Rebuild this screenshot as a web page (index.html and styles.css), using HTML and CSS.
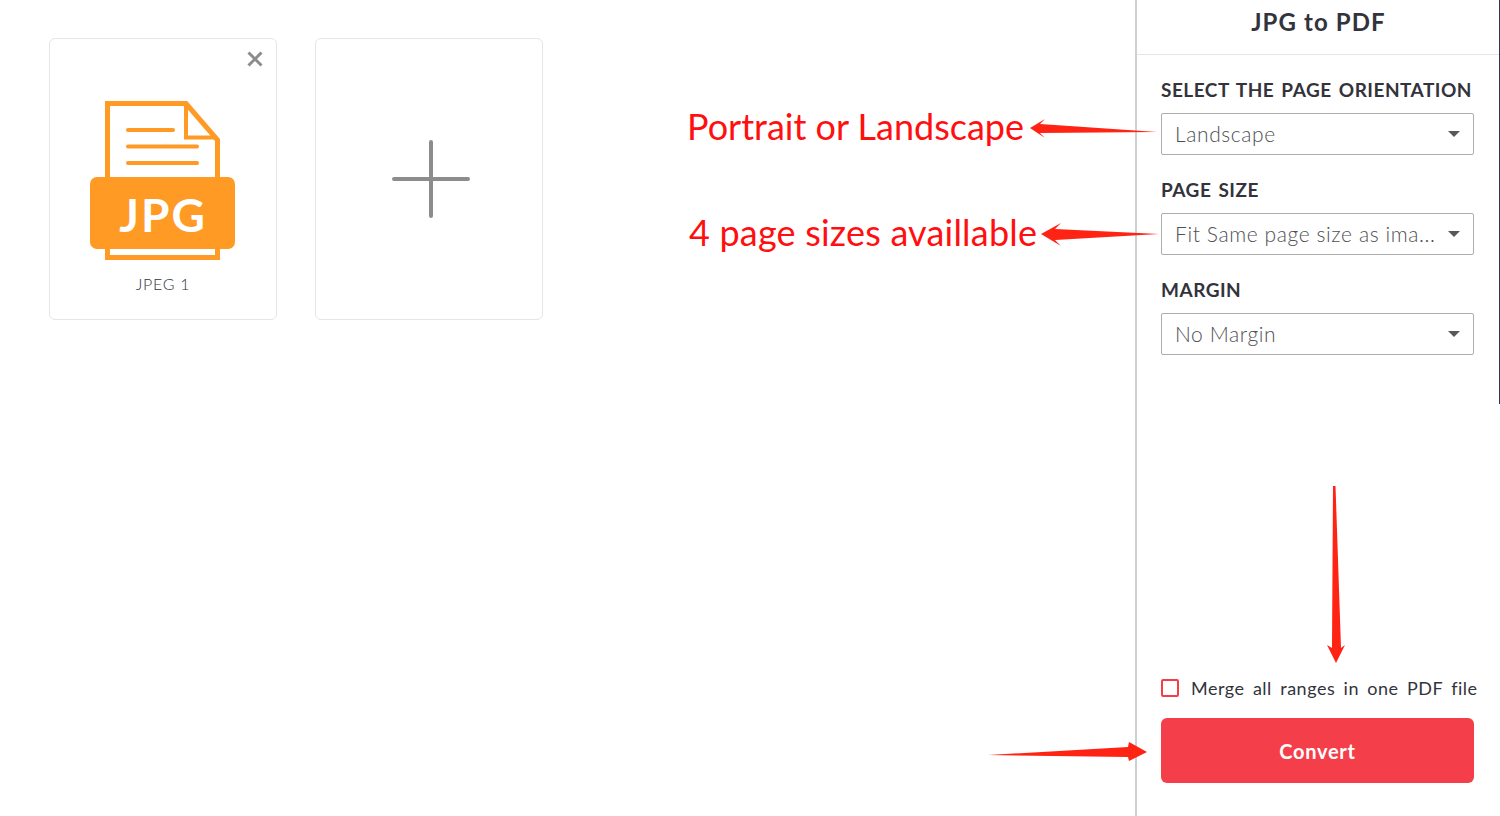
FILE: index.html
```html
<!DOCTYPE html>
<html>
<head>
    <meta charset="utf-8" />
    <title>JPG to PDF</title>
    <link rel="stylesheet" href="styles.css">
</head>
<body>
    <div id="content">
        <div id="files">
            <div class="file_card">
                <svg class="file_close" width="18" height="18" viewBox="0 0 18 18">
                    <path d="M2.500 2.500L15.500 15.500M15.500 2.500L2.500 15.500" stroke="#8c8c8c" stroke-width="3" fill="none" />
                </svg>
                <div class="file_icon">
                    <svg width="145" height="159" viewBox="0 0 145 159">
                        <path d="M17.500 77V2.500H96L127.500 39V77" fill="#fff" stroke="#ff9a25" stroke-width="5" />
                        <path d="M96 2.500V36.500H127" fill="none" stroke="#ff9a25" stroke-width="4" />
                        <rect x="36" y="27" width="49" height="4" rx="2" fill="#ff9a25" />
                        <rect x="36" y="43.500" width="73" height="4" rx="2" fill="#ff9a25" />
                        <rect x="36" y="60" width="73" height="4" rx="2" fill="#ff9a25" />
                        <path d="M17.500 140V156.500H127.500V140" fill="#fff" stroke="#ff9a25" stroke-width="5" />
                        <rect x="0" y="76" width="145" height="72" rx="7" fill="#ff9a25" />
                        <text x="73" y="131" text-anchor="middle" class="file_badge">JPG</text>
                    </svg>
                </div>
                <div class="file_name">JPEG 1</div>
            </div>
            <div class="file_card">
                <svg class="file_add" width="78" height="78" viewBox="0 0 78 78">
                    <path d="M39 2V76M2 39H76" stroke="#8c8c8c" stroke-width="4" stroke-linecap="round" fill="none" />
                </svg>
            </div>
        </div>
        <div id="sidebar">
            <div id="sidebar_title">JPG to PDF</div>
            <div id="sidebar_options">
                <div class="option_label">SELECT THE PAGE ORIENTATION</div>
                <div class="option_select"><span>Landscape</span><i class="caret"></i></div>
                <div class="option_label">PAGE SIZE</div>
                <div class="option_select"><span>Fit Same page size as ima...</span><i class="caret"></i></div>
                <div class="option_label">MARGIN</div>
                <div class="option_select"><span>No Margin</span><i class="caret"></i></div>
            </div>
            <div id="sidebar_bottom">
                <label class="merge"><i class="merge_box"></i>Merge all ranges in one PDF file</label>
                <button id="button_convert">Convert</button>
            </div>
        </div>
        <div id="edge_line"></div>
    </div>

    <!-- annotations drawn on top of the screenshot -->
    <div class="note note_orientation">Portrait or Landscape</div>
    <div class="note note_size">4 page sizes availlable</div>
    <svg id="arrows" width="1500" height="816" viewBox="0 0 1500 816">
        <path d="M1030 128L1045 119L1040 124L1157 132L1040 133L1045 138Z" fill="#ff2314" />
        <path d="M1041 234L1061 223L1055 229L1159 234L1055 240L1061 246Z" fill="#ff2314" />
        <path d="M1333 486H1335.500L1341 648L1345 645L1336 663L1327 645L1332 648Z" fill="#ff2314" />
        <path d="M988 755L1128 747L1129 742L1147 752L1129 761L1128 757Z" fill="#ff2314" />
    </svg>
</body>
</html>
```
FILE: styles.css
```css
html, body {
    margin: 0;
    padding: 0;
    height: 100%;
    overflow: hidden;
    background-color: #ffffff;
}
body {
    font-family: "Lato", "Noto Sans", sans-serif;
    color: #33333b;
}
#content {
    display: flex;
    height: 816px;
}
#files {
    flex: 1;
    display: flex;
    align-items: flex-start;
    gap: 38px;
    padding: 38px 0 0 49px;
}
.file_card {
    position: relative;
    box-sizing: border-box;
    width: 228px;
    height: 282px;
    border: 1px solid #e6e6e6;
    border-radius: 6px;
    display: flex;
    flex-direction: column;
    align-items: center;
}
.file_close {
    position: absolute;
    top: 11px;
    right: 12px;
}
.file_icon {
    height: 159px;
    margin-top: 62px;
    margin-right: 2px;
}
.file_icon svg {
    display: block;
}
.file_badge {
    font-family: "Lato", sans-serif;
    font-size: 46px;
    font-weight: 700;
    letter-spacing: 2px;
    fill: #ffffff;
}
.file_name {
    margin-top: 14px;
    font-size: 16px;
    line-height: 20px;
    font-weight: 300;
    letter-spacing: 0.7px;
    color: #33333b;
}
.file_add {
    margin-top: 101px;
    margin-left: 4px;
}
#sidebar {
    box-sizing: border-box;
    width: 365px;
    height: 816px;
    border-left: 2px solid #d0d0d0;
    display: flex;
    flex-direction: column;
}
#sidebar_title {
    box-sizing: border-box;
    height: 55px;
    line-height: 44px;
    text-align: center;
    font-size: 24px;
    font-weight: 700;
    border-bottom: 1px solid #e6e6e6;
    letter-spacing: 1.1px;
    flex-shrink: 0;
}
#sidebar_options {
    flex: 1;
    padding: 25px 0 0 24px;
}
.option_label {
    height: 20px;
    margin-bottom: 13px;
    line-height: 20px;
    font-size: 19px;
    font-weight: 700;
    letter-spacing: 0.5px;
    word-spacing: 2px;
    white-space: nowrap;
}
.option_select {
    box-sizing: border-box;
    width: 313px;
    height: 42px;
    padding: 0 13px 2px 13px;
    margin-bottom: 25px;
    border: 1px solid #acacac;
    border-radius: 2px;
    display: flex;
    align-items: center;
    justify-content: space-between;
    font-size: 21px;
    font-weight: 300;
    letter-spacing: 0.6px;
    color: #4f4f55;
}
.option_select span {
    white-space: nowrap;
}
.caret {
    width: 0;
    height: 0;
    margin-top: 2px;
    border-style: solid;
    border-color: #595959 transparent transparent transparent;
    border-width: 6px 6.500px 0 6.500px;
}
#sidebar_bottom {
    padding: 0 0 33px 24px;
}
.merge {
    display: flex;
    align-items: center;
    height: 20px;
    margin-bottom: 20px;
    font-size: 18px;
    letter-spacing: 0.5px;
    word-spacing: 3.300px;
    white-space: nowrap;
}
.merge_box {
    box-sizing: border-box;
    width: 18px;
    height: 18px;
    margin-right: 12px;
    border: 2px solid #f43f4a;
    border-radius: 2px;
}
#button_convert {
    display: block;
    width: 313px;
    height: 65px;
    border: none;
    border-radius: 6px;
    background-color: #f43f4a;
    color: #ffffff;
    font-family: "Lato", "Noto Sans", sans-serif;
    font-size: 20px;
    font-weight: 700;
    letter-spacing: 0.7px;
}
#edge_line {
    position: absolute;
    top: 0;
    right: 0;
    width: 1px;
    height: 404px;
    background-color: #33335a;
}
.note {
    position: absolute;
    color: #ff0f0f;
    font-family: "Lato", "Noto Sans", sans-serif;
    font-size: 36px;
    line-height: 44px;
    white-space: nowrap;
}
.note_orientation {
    left: 687px;
    top: 104px;
}
.note_size {
    left: 689px;
    top: 210px;
    letter-spacing: 0.2px;
}
#arrows {
    position: absolute;
    top: 0;
    left: 0;
    pointer-events: none;
}
```
